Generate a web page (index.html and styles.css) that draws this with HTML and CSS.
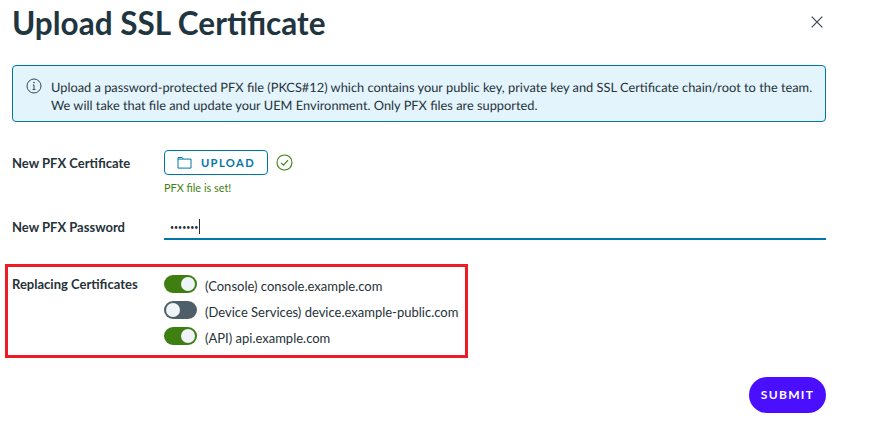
FILE: index.html
```html
<!DOCTYPE html>
<html lang="en">
<head>
<meta charset="utf-8">
<title>Upload SSL Certificate</title>
<link rel="stylesheet" href="styles.css">
</head>
<body>
<main class="dialog">
  <header class="head">
    <h1 class="title">Upload SSL Certificate</h1>
    <button class="close" aria-label="Close">
      <svg width="12" height="12" viewBox="0 0 12 12"><path d="M.7.7l10.6 10.6M11.3.7L.7 11.3" stroke="#37474f" stroke-width="1.2" fill="none"/></svg>
    </button>
  </header>
  <div class="notice">
    <svg class="notice-icon" width="16" height="16" viewBox="0 0 16 16"><circle cx="8" cy="8" r="7" stroke="#37474f" stroke-width="1" fill="none"/><path d="M8 7v4.4M6.6 11.5h2.8M6.8 7h1.2" stroke="#37474f" stroke-width="1" fill="none"/><circle cx="8" cy="4.6" r=".8" fill="#37474f"/></svg>
    <p class="notice-text">Upload a password-protected PFX file (PKCS#12) which contains your public key, private key and SSL Certificate chain/root to the team.<br>We will take that file and update your UEM Environment. Only PFX files are supported.</p>
  </div>
  <div class="row row-upload">
    <div class="label">New PFX Certificate</div>
    <div class="field">
      <div class="upload-line">
        <button class="upload">
          <svg width="15" height="13" viewBox="0 0 15 13"><path d="M1 1.5h4.2l1.2 1.6H14v9H1z M1 3.1h5.4" stroke="#0077aa" stroke-width="1" fill="none"/></svg>
          <span>UPLOAD</span>
        </button>
        <svg width="17" height="17" viewBox="0 0 17 17"><circle cx="8.5" cy="8.5" r="7.5" stroke="#3f7f12" stroke-width="1.1" fill="none"/><path d="M5 8.8l2.4 2.4 4.6-5" stroke="#3f7f12" stroke-width="1.1" fill="none"/></svg>
      </div>
      <div class="hint">PFX file is set!</div>
    </div>
  </div>
  <div class="row row-password">
    <div class="label">New PFX Password</div>
    <div class="input"><span class="dots">•••••••</span><span class="caret"></span></div>
  </div>
  <section class="replace">
    <div class="label">Replacing Certificates</div>
    <div class="toggles">
      <div class="toggle-row"><span class="switch on"><span class="knob"></span></span><span class="toggle-text">(Console) console.example.com</span></div>
      <div class="toggle-row"><span class="switch"><span class="knob"></span></span><span class="toggle-text">(Device Services) device.example-public.com</span></div>
      <div class="toggle-row"><span class="switch on"><span class="knob"></span></span><span class="toggle-text">(API) api.example.com</span></div>
    </div>
  </section>
  <div class="actions"><button class="submit">SUBMIT</button></div>
</main>
</body>
</html>
```
FILE: styles.css
```css
* { box-sizing: border-box; }
html, body { margin: 0; height: 425px; overflow: hidden; background: #fff; }
body { font-family: Lato, "Noto Sans", sans-serif; color: #263238; }
.dialog { width: 826px; padding-left: 12px; display: flex; flex-direction: column; }
.head { display: flex; justify-content: space-between; align-items: center; height: 52px; margin-top: -2px; }
.title { margin: 0 0 2px; font-size: 31.5px; line-height: 50px; font-weight: 700; color: #1f3540; }
.close { border: 0; background: none; padding: 0; margin: 0 3px 4px 0; display: flex; }
.notice { margin-top: 15px; height: 57px; display: flex; gap: 9px; padding: 12px 0 0 13px; background: #e3f4fd; border: 1px solid #0077aa; border-radius: 4px; }
.notice-icon { flex: none; }
.notice-text { margin: 0; font-size: 12.82px; text-rendering: geometricPrecision; line-height: 18px; white-space: nowrap; color: #263238; }
.row { display: flex; }
.label { width: 152px; flex: none; font-size: 13px; font-weight: 700; color: #263238; }
.row-upload { margin-top: 28px; }
.row-upload .label { padding-top: 4px; line-height: 18px; }
.upload-line { display: flex; align-items: center; gap: 8px; }
.upload { width: 104px; height: 25px; display: flex; align-items: center; justify-content: center; gap: 9px; background: #fff; border: 1px solid #0077aa; border-radius: 4px; padding: 0; color: #0077aa; font: 700 11.2px Lato, sans-serif; letter-spacing: 1.4px; }
.hint { margin-top: 6px; font-size: 10.9px; line-height: 13px; color: #3f7f12; }
.row-password { margin-top: 21px; align-items: flex-start; }
.row-password .label { padding-top: 3px; line-height: 18px; }
.input { flex: 1; height: 25px; border-bottom: 2px solid #0077aa; display: flex; align-items: center; padding: 0 0 0 6px; }
.dots { font-size: 7px; letter-spacing: 0; color: #263238; }
.caret { width: 1px; height: 15px; background: #263238; margin-left: 1px; }
.replace { margin: 24px 0 0 -7px; width: 463px; height: 94px; border: 3px solid #ed1c24; padding: 8px 0 0 4px; display: flex; }
.toggles { display: flex; flex-direction: column; gap: 8px; }
.replace .label { line-height: 18px; }
.toggle-row { display: flex; align-items: center; gap: 8px; height: 18px; font-size: 13px; color: #263238; }
.toggle-text { padding-top: 4px; }
.switch { width: 33px; height: 18px; border-radius: 9px; background: #4f5f69; padding: 2px; display: flex; }
.switch.on { background: #3f7f12; justify-content: flex-end; }
.knob { width: 14px; height: 14px; border-radius: 50%; background: #eef4f8; }
.actions { display: flex; justify-content: flex-end; margin-top: 19px; }
.submit { width: 77px; height: 36px; border: 0; border-radius: 18px; background: #4a0fff; color: #fff; font: 700 12px Lato, sans-serif; letter-spacing: 1.3px; padding: 0 0 2px; }
```
